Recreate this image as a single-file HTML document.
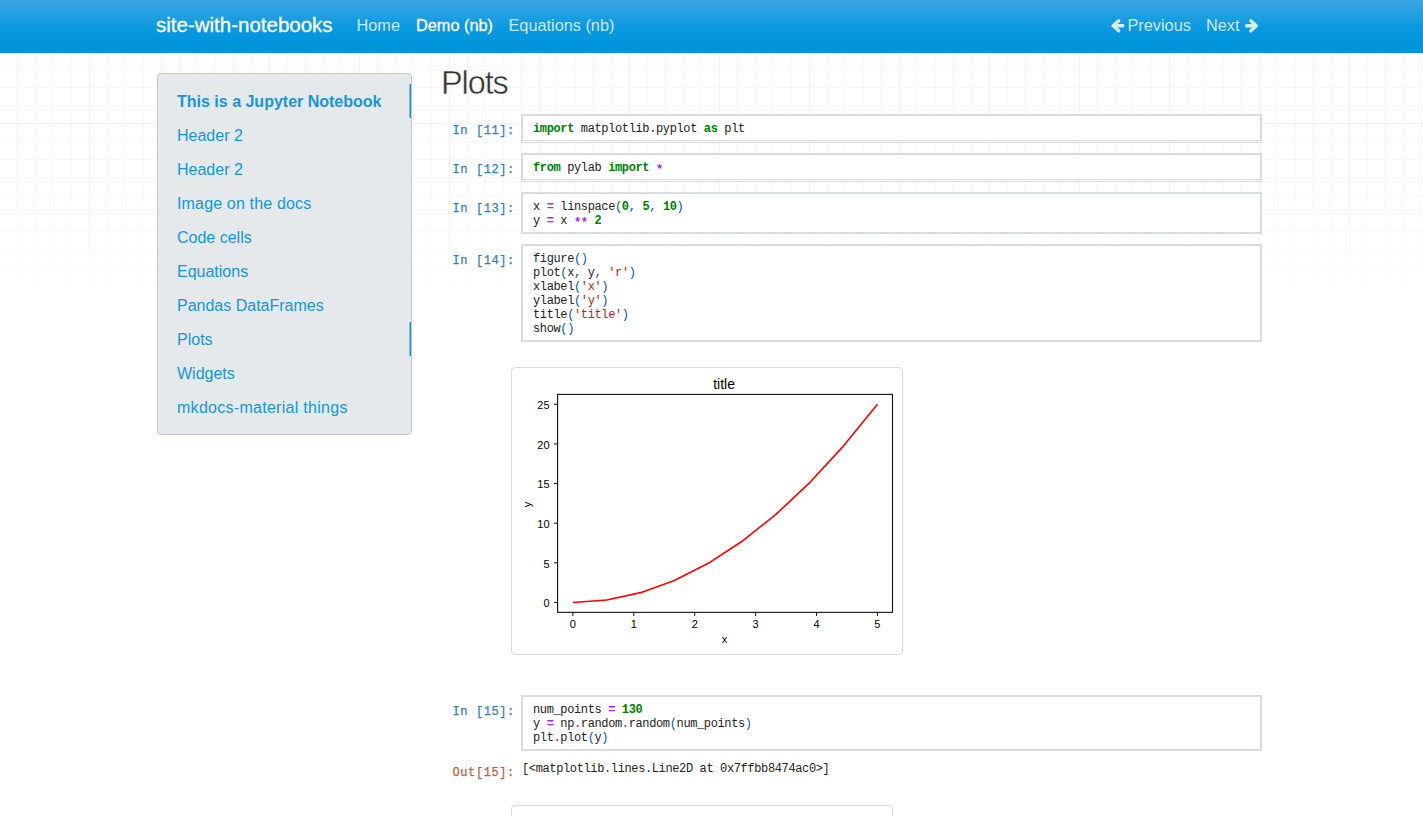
<!DOCTYPE html>
<html><head><meta charset="utf-8">
<style>
*{box-sizing:border-box;margin:0;padding:0}
html,body{width:1423px;height:816px;overflow:hidden;background:#fff}
body{position:relative;font-family:"Liberation Sans",sans-serif;color:#333}
.abs{position:absolute;white-space:pre}
#grid{position:absolute;left:0;top:0;width:1423px;height:310px;
 background-image:
  linear-gradient(to right, #f2f2f2 1px, transparent 1px),
  linear-gradient(to bottom, #f2f2f2 1px, transparent 1px),
  linear-gradient(to right, #f7f7f7 1px, transparent 1px),
  linear-gradient(to bottom, #f7f7f7 1px, transparent 1px);
 background-size:90px 90px,90px 90px,18px 18px,18px 18px;
 background-position:89px 0,0 33px,17px 0,0 15px;
 -webkit-mask-image:linear-gradient(to bottom,#000 0,#000 185px,transparent 305px);
}
#nav{position:absolute;left:0;top:0;width:1423px;height:53px;
 background:linear-gradient(#3ba7e3,#0798df 56%,#0093da);}
.brand{left:156px;top:12px;font-size:20.5px;color:#fff;line-height:26px;-webkit-text-stroke:.3px #fff}
.nl{top:14px;font-size:16.3px;line-height:22px;color:rgba(255,255,255,.8)}
#side{position:absolute;left:157px;top:73px;width:255px;height:362px;background:#e6e9ec;border:1px solid #c4c7ca;border-radius:4px}
.si{left:177px;font-size:16px;line-height:22px;color:#1596dc}
.ind{position:absolute;left:410px;width:1px;height:34px;background:#0f97dd;box-shadow:-1px 0 0 rgba(15,151,221,.5)}
h1{position:absolute;left:441px;top:64px;font-size:32.5px;letter-spacing:-1.1px;-webkit-text-stroke:.45px #fff;font-weight:normal;line-height:38px;color:#333}
.cell{position:absolute;left:521px;width:741px;border:1px solid #d9dcdd;}
.cell .in{border:1px solid #d9dcdd;padding:6px 0 4px 10px;background:#fff}
pre{font-family:"Liberation Mono",monospace;font-size:12px;letter-spacing:-0.37px;line-height:14px;color:#222}
.pr{position:absolute;left:452.5px;-webkit-text-stroke:.25px currentColor;font-family:"Liberation Mono",monospace;font-size:12px;letter-spacing:.6px;line-height:16px;color:#307fc1;white-space:pre}
.cell .in.one{margin-bottom:1px;height:26px}
.k{color:#008000;font-weight:bold}.o{color:#aa22ff;font-weight:bold}.st{position:relative;top:2px}.n{color:#008000;font-weight:bold}.s{color:#ba2121}.p{color:#0055aa}
svg text{font-family:"Liberation Sans",sans-serif;font-size:11px;fill:#000}
.box{position:absolute;border:1px solid #dadada;border-radius:4px;background:#fff}
</style></head><body>
<div id="grid"></div>
<div id="nav"></div>
<div class="abs brand">site-with-notebooks</div>
<div class="abs nl" style="left:356.5px">Home</div>
<div class="abs nl" style="left:416px;color:#fff;-webkit-text-stroke:.3px #fff">Demo (nb)</div>
<div class="abs nl" style="left:508.5px">Equations (nb)</div>
<div class="abs nl" style="left:1127.5px">Previous</div>
<div class="abs nl" style="left:1206px">Next</div>

<svg class="arr" style="position:absolute;left:1100px;top:10px" width="170" height="30" viewBox="1100 10 170 30"><g fill="none" stroke="rgba(255,255,255,.82)" stroke-width="3.4" stroke-linecap="round" stroke-linejoin="round"><path d="M1118.7 20.8L1113.1 25.8L1118.7 30.8M1113.6 25.8H1122.8"/><path d="M1246.7 25.8H1255.9M1250.8 20.8L1256.4 25.8L1250.8 30.8"/></g></svg>
<div id="side"></div>
<div class="ind" style="top:84px"></div>
<div class="ind" style="top:322px"></div>
<div class="abs si" style="top:91px;font-weight:bold">This is a Jupyter Notebook</div>
<div class="abs si" style="top:125px">Header 2</div>
<div class="abs si" style="top:159px">Header 2</div>
<div class="abs si" style="top:193px;letter-spacing:.16px">Image on the docs</div>
<div class="abs si" style="top:227px">Code cells</div>
<div class="abs si" style="top:261px">Equations</div>
<div class="abs si" style="top:295px">Pandas DataFrames</div>
<div class="abs si" style="top:329px">Plots</div>
<div class="abs si" style="top:363px">Widgets</div>
<div class="abs si" style="top:397px;letter-spacing:.28px">mkdocs-material things</div>

<h1>Plots</h1>

<div class="pr" style="top:123px">In [11]:</div>
<div class="cell" style="top:114px"><div class="in one"><pre><span class="k">import</span> matplotlib.pyplot <span class="k">as</span> plt</pre></div></div>
<div class="pr" style="top:162px">In [12]:</div>
<div class="cell" style="top:153px"><div class="in one"><pre><span class="k">from</span> pylab <span class="k">import</span> <span class="o st">*</span></pre></div></div>
<div class="pr" style="top:201px">In [13]:</div>
<div class="cell" style="top:192px"><div class="in"><pre>x <span class="o">=</span> linspace<span class="p">(</span><span class="n">0</span><span class="p">,</span> <span class="n">5</span><span class="p">,</span> <span class="n">10</span><span class="p">)</span>
y <span class="o">=</span> x <span class="o st">**</span> <span class="n">2</span></pre></div></div>
<div class="pr" style="top:253px">In [14]:</div>
<div class="cell" style="top:244px"><div class="in"><pre>figure<span class="p">()</span>
plot<span class="p">(</span>x<span class="p">,</span> y<span class="p">,</span> <span class="s">'r'</span><span class="p">)</span>
xlabel<span class="p">(</span><span class="s">'x'</span><span class="p">)</span>
ylabel<span class="p">(</span><span class="s">'y'</span><span class="p">)</span>
title<span class="p">(</span><span class="s">'title'</span><span class="p">)</span>
show<span class="p">()</span></pre></div></div>

<div class="box" style="left:511px;top:367px;width:392px;height:288px"></div>
<svg class="plot" width="392" height="288" viewBox="0 0 392 288" style="position:absolute;left:511px;top:367px">
<polyline points="61.88,235.44 95.72,232.99 129.56,225.65 163.39,213.42 197.23,196.30 231.07,174.28 264.91,147.36 298.75,115.56 332.59,78.86 366.43,37.27" fill="none" stroke="#ff0000" stroke-width="1.6" stroke-linejoin="round"/>
<rect x="46.60" y="27.40" width="334.90" height="217.95" fill="none" stroke="#111" stroke-width="1.1"/>
<line x1="61.88" y1="245.35" x2="61.88" y2="248.95" stroke="#111" stroke-width="1"/>
<text x="61.88" y="261.10" text-anchor="middle">0</text>
<line x1="122.79" y1="245.35" x2="122.79" y2="248.95" stroke="#111" stroke-width="1"/>
<text x="122.79" y="261.10" text-anchor="middle">1</text>
<line x1="183.70" y1="245.35" x2="183.70" y2="248.95" stroke="#111" stroke-width="1"/>
<text x="183.70" y="261.10" text-anchor="middle">2</text>
<line x1="244.61" y1="245.35" x2="244.61" y2="248.95" stroke="#111" stroke-width="1"/>
<text x="244.61" y="261.10" text-anchor="middle">3</text>
<line x1="305.52" y1="245.35" x2="305.52" y2="248.95" stroke="#111" stroke-width="1"/>
<text x="305.52" y="261.10" text-anchor="middle">4</text>
<line x1="366.43" y1="245.35" x2="366.43" y2="248.95" stroke="#111" stroke-width="1"/>
<text x="366.43" y="261.10" text-anchor="middle">5</text>
<line x1="43.00" y1="235.44" x2="46.60" y2="235.44" stroke="#111" stroke-width="1"/>
<text x="38.60" y="240.24" text-anchor="end">0</text>
<line x1="43.00" y1="195.81" x2="46.60" y2="195.81" stroke="#111" stroke-width="1"/>
<text x="38.60" y="200.61" text-anchor="end">5</text>
<line x1="43.00" y1="156.17" x2="46.60" y2="156.17" stroke="#111" stroke-width="1"/>
<text x="38.60" y="160.97" text-anchor="end">10</text>
<line x1="43.00" y1="116.54" x2="46.60" y2="116.54" stroke="#111" stroke-width="1"/>
<text x="38.60" y="121.34" text-anchor="end">15</text>
<line x1="43.00" y1="76.90" x2="46.60" y2="76.90" stroke="#111" stroke-width="1"/>
<text x="38.60" y="81.70" text-anchor="end">20</text>
<line x1="43.00" y1="37.27" x2="46.60" y2="37.27" stroke="#111" stroke-width="1"/>
<text x="38.60" y="42.07" text-anchor="end">25</text>
<text x="213.60" y="275.50" text-anchor="middle">x</text>
<text transform="translate(19.50,137.60) rotate(-90)" text-anchor="middle">y</text>
<text x="213.10" y="22.00" text-anchor="middle" style="font-size:14px">title</text>
</svg>

<div class="pr" style="top:704px">In [15]:</div>
<div class="cell" style="top:695px"><div class="in"><pre>num_points <span class="o">=</span> <span class="n">130</span>
y <span class="o">=</span> np<span class="o">.</span>random<span class="o">.</span>random<span class="p">(</span>num_points<span class="p">)</span>
plt<span class="o">.</span>plot<span class="p">(</span>y<span class="p">)</span></pre></div></div>
<div class="pr" style="top:765px;color:#bf5b3d">Out[15]:</div>
<pre class="abs" style="left:522px;top:762px">[&lt;matplotlib.lines.Line2D at 0x7ffbb8474ac0&gt;]</pre>
<div class="box" style="left:511px;top:805px;width:382px;height:100px"></div>
</body></html>
